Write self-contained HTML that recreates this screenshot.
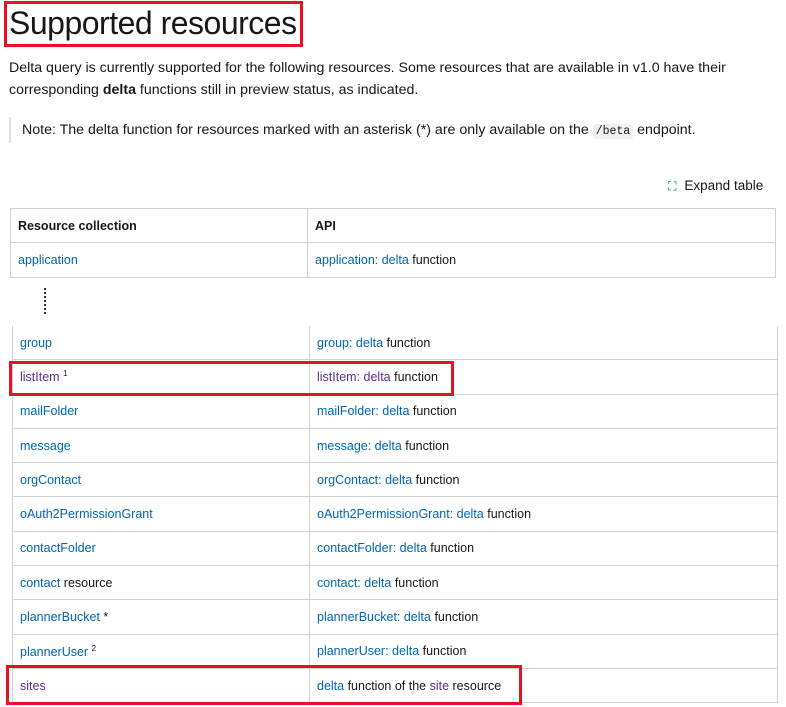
<!DOCTYPE html>
<html><head><style>
body{margin:0;width:786px;height:707px;background:#fff;font-family:"Liberation Sans",sans-serif;color:#171717;position:relative;overflow:hidden}
.abs{position:absolute}
h1{position:absolute;left:9px;top:3px;margin:0;font-size:32px;font-weight:normal;line-height:40px;letter-spacing:-0.5px}
.box{position:absolute;border:3px solid #e81123;box-sizing:border-box}
p{margin:0}
.t{font-size:14.2px;line-height:22px}
a{color:#0065b3;text-decoration:none}
a.v{color:#5c2e91}
table{position:absolute;border-collapse:collapse;font-size:12.5px}
td,th{border:1px solid #d1d1d1;height:33.3px;padding:0 7px;text-align:left;vertical-align:middle}
th{font-weight:bold}
.c1{width:282px}
code{font-family:"Liberation Mono",monospace;font-size:11.5px;background:#f0f0f0;padding:1px 3px;border-radius:3px}
</style></head><body>
<h1>Supported resources</h1>
<div class="box" style="left:4px;top:1px;width:299px;height:46px"></div>
<p class="t abs" style="left:9px;top:57px;width:770px">Delta query is currently supported for the following resources. Some resources that are available in v1.0 have their corresponding <b>delta</b> functions still in preview status, as indicated.</p>
<div class="abs" style="left:9px;top:117px;width:2px;height:26px;background:#e0e0e0"></div>
<p class="t abs" style="left:22px;top:119px">Note: The delta function for resources marked with an asterisk (*) are only available on the <code>/beta</code> endpoint.</p>
<div class="abs t" style="left:668px;top:175px;font-size:13.5px"><span style="color:#0065b3;font-size:12px;margin-right:8px">⛶</span>Expand table</div>
<table style="left:10px;top:208px;width:766px">
<tr><th class="c1">Resource collection</th><th>API</th></tr>
<tr><td><a>application</a></td><td><a>application: delta</a> function</td></tr>
</table>
<div class="abs" style="left:0;top:279px;width:786px;height:46px;background:#fff"></div>
<div class="abs" style="left:44px;top:288px;width:0;height:26px;border-left:2px dotted #333"></div>
<table style="left:12px;top:326px;width:766px;border-top:none">
<tr><td class="c1" style="border-top:none"><a>group</a></td><td style="border-top:none"><a>group: delta</a> function</td></tr>
<tr><td><a class="v">listItem</a> <sup style="font-size:8px">1</sup></td><td><a class="v">listItem: delta</a> function</td></tr>
<tr><td><a>mailFolder</a></td><td><a>mailFolder: delta</a> function</td></tr>
<tr><td><a>message</a></td><td><a>message: delta</a> function</td></tr>
<tr><td><a>orgContact</a></td><td><a>orgContact: delta</a> function</td></tr>
<tr><td><a>oAuth2PermissionGrant</a></td><td><a>oAuth2PermissionGrant: delta</a> function</td></tr>
<tr><td><a>contactFolder</a></td><td><a>contactFolder: delta</a> function</td></tr>
<tr><td><a>contact</a> resource</td><td><a>contact: delta</a> function</td></tr>
<tr><td><a>plannerBucket</a> *</td><td><a>plannerBucket: delta</a> function</td></tr>
<tr><td><a>plannerUser</a> <sup style="font-size:8px">2</sup></td><td><a>plannerUser: delta</a> function</td></tr>
<tr><td><a class="v">sites</a></td><td><a>delta</a> function of the <a class="v">site</a> resource</td></tr>
</table>
<div class="box" style="left:9px;top:361px;width:445px;height:35px"></div>
<div class="box" style="left:6px;top:665px;width:516px;height:40px"></div>
</body></html>
